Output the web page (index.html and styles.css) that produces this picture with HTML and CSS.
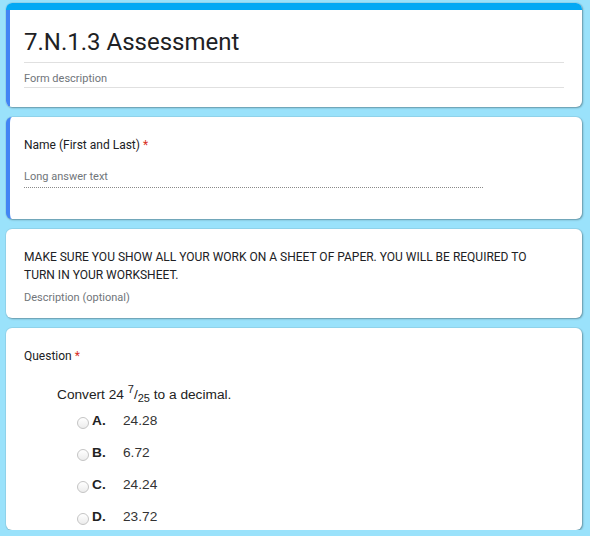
FILE: index.html
```html
<!DOCTYPE html>
<html lang="en">
<head>
<meta charset="utf-8">
<title>7.N.1.3 Assessment</title>
<link rel="stylesheet" href="styles.css">
</head>
<body>
<main class="form">
  <section class="card card-header">
    <div class="topbar"></div>
    <div class="header-inner">
      <h1 class="form-title">7.N.1.3 Assessment</h1>
      <div class="form-desc">Form description</div>
    </div>
  </section>

  <section class="card card-selected card-name">
    <div class="q-title">Name (First and Last) <span class="req">*</span></div>
    <div class="long-answer">Long answer text</div>
  </section>

  <section class="card card-notice">
    <div class="notice-text">MAKE SURE YOU SHOW ALL YOUR WORK ON A SHEET OF PAPER. YOU WILL BE REQUIRED TO TURN IN YOUR WORKSHEET.</div>
    <div class="notice-desc">Description (optional)</div>
  </section>

  <section class="card card-question">
    <div class="q-title">Question <span class="req">*</span></div>
    <div class="q-body">
      <p class="q-prompt">Convert 24 <sup>7</sup>/<sub>25</sub> to a decimal.</p>
      <ul class="options">
        <li class="option"><span class="radio"></span><b class="opt-letter">A.</b><span class="opt-value">24.28</span></li>
        <li class="option"><span class="radio"></span><b class="opt-letter">B.</b><span class="opt-value">6.72</span></li>
        <li class="option"><span class="radio"></span><b class="opt-letter">C.</b><span class="opt-value">24.24</span></li>
        <li class="option"><span class="radio"></span><b class="opt-letter">D.</b><span class="opt-value">23.72</span></li>
      </ul>
    </div>
  </section>
</main>
</body>
</html>
```

FILE: styles.css
```css
html, body {
  margin: 0;
  background: #9ae2fb;
}
body {
  padding: 3px 8px 0 6px;
  font-family: Roboto, "Noto Sans", sans-serif;
  color: #202124;
}
.form {
  display: flex;
  flex-direction: column;
  gap: 10px;
}
.card {
  background: #fff;
  border-radius: 6px;
  overflow: hidden;
  box-shadow: 0 0 0 1px rgba(0,0,0,0.05), 1px 1px 2px rgba(0,0,0,0.3);
  padding: 0 18px;
}
.card-selected {
  border-left: 4px solid #4285f4;
  padding-left: 14px;
}
.card-header {
  padding: 0;
}
.topbar {
  height: 7px;
  background: #03a9f4;
}
.header-inner {
  border-left: 4px solid #4285f4;
  padding: 16px 18px 19px 14px;
}
.form-title {
  margin: 0;
  font-size: 24px;
  font-weight: 400;
  line-height: 32px;
  padding-bottom: 4px;
  border-bottom: 1px solid #e0e0e0;
}
.form-desc {
  font-size: 11px;
  line-height: 16px;
  color: #70757a;
  padding: 8px 0 0;
  border-bottom: 1px solid #e0e0e0;
}
.q-title {
  font-size: 12px;
  line-height: 20px;
}
.req {
  color: #d93025;
}
.card-name {
  padding-top: 18px;
  padding-bottom: 31px;
}
.long-answer {
  margin-top: 14px;
  width: 459px;
  font-size: 11px;
  line-height: 16px;
  color: #70757a;
  padding-bottom: 2px;
  border-bottom: 1px dotted #8a8a8a;
}
.card-notice {
  padding-top: 19px;
  padding-bottom: 12px;
}
.notice-text {
  max-width: 515px;
  font-size: 12px;
  line-height: 18px;
  color: #202124;
}
.notice-desc {
  margin-top: 6px;
  font-size: 11px;
  line-height: 16px;
  color: #70757a;
}
.card-question {
  padding-top: 18px;
  padding-bottom: 4px;
}
.q-body {
  font-family: "Liberation Sans", Arial, sans-serif;
  color: #333;
  font-size: 13.7px;
}
.q-prompt {
  margin: 20px 0 0 33px;
  line-height: 18px;
  color: #222;
}
.q-prompt sup,
.q-prompt sub {
  font-size: 11px;
  line-height: 0;
}
.q-prompt sup {
  vertical-align: 6px;
}
.q-prompt sub {
  vertical-align: -3px;
}
.options {
  list-style: none;
  margin: 8px 0 0 53px;
  padding: 0;
  display: flex;
  flex-direction: column;
  gap: 14px;
}
.option {
  display: flex;
  align-items: center;
  line-height: 18px;
}
.radio {
  width: 10px;
  height: 10px;
  border: 1px solid #c4c4c4;
  border-radius: 50%;
  background: linear-gradient(#ffffff, #ececec);
  margin-top: 4px;
  margin-right: 3px;
  flex: none;
}
.opt-letter {
  width: 31px;
  color: #222;
}
.opt-value {
  color: #333;
}
```
